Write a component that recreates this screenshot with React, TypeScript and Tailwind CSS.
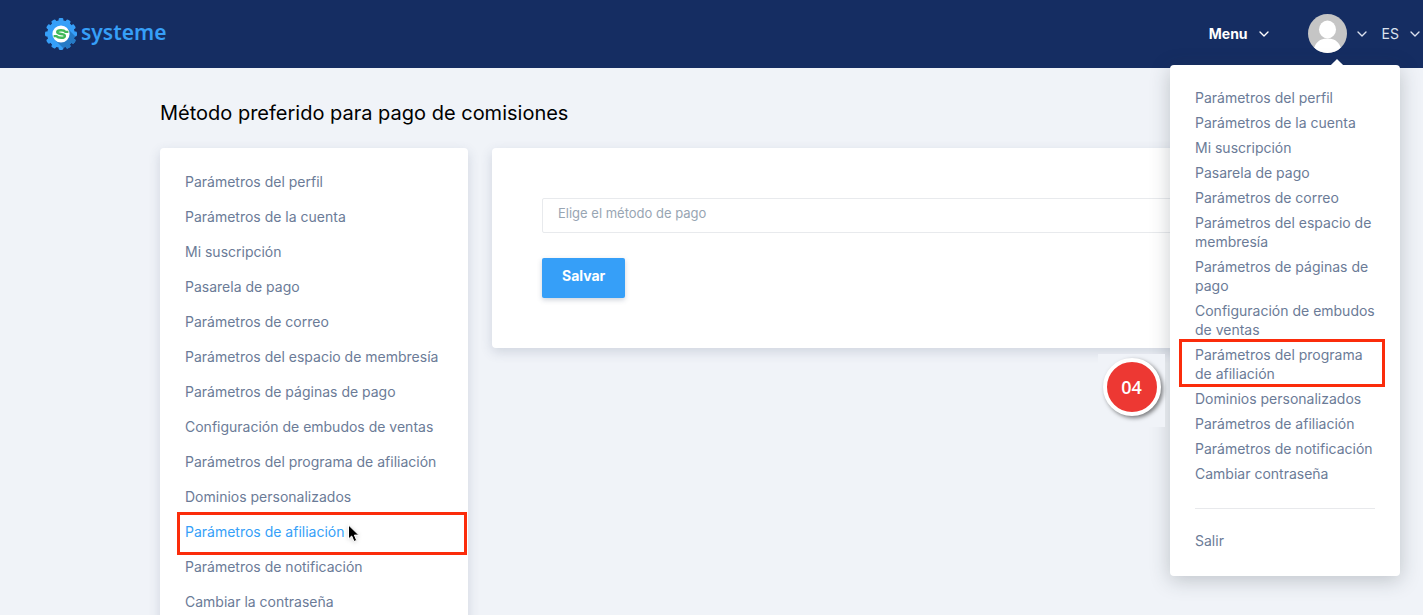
import { ChevronDown } from 'lucide-react'

const profileLinks = [
  'Parámetros del perfil',
  'Parámetros de la cuenta',
  'Mi suscripción',
  'Pasarela de pago',
  'Parámetros de correo',
  'Parámetros del espacio de membresía',
  'Parámetros de páginas de pago',
  'Configuración de embudos de ventas',
  'Parámetros del programa de afiliación',
  'Dominios personalizados',
  'Parámetros de afiliación',
  'Parámetros de notificación',
]

const sidebarLinks = [...profileLinks, 'Cambiar la contraseña']
const menuLinks = [...profileLinks, 'Cambiar contraseña']

const teeth = [0, 30, 60, 90, 120, 150]

function Logo() {
  return (
    <a href="#" className="flex items-center gap-1 text-[#369ff8]">
      <svg viewBox="0 0 32 32" className="size-8" aria-hidden="true">
        <clipPath id="gear">
          <circle cx="16" cy="16" r="13.8" />
          {teeth.map((angle) => (
            <rect key={angle} x="13.6" y="0" width="4.8" height="32" rx="1.4" transform={`rotate(${angle} 16 16)`} />
          ))}
        </clipPath>
        <g clipPath="url(#gear)">
          <rect width="32" height="32" fill="currentColor" />
          <path d="M22 10 34 22V34H22L10 22z" fill="#267ac5" />
        </g>
        <circle cx="16" cy="16" r="8.6" fill="#fff" />
        <path
          d="M23.4 13.9H20.600c-1-1.300-2.500-1.700-4.600-1.700-2.400 0-3.800.6-3.800 1.900 0 2.900 7.700.9 7.700 3.800 0 1.300-1.500 1.900-3.800 1.900-2 0-3.600-.4-4.700-1.700H8.600"
          fill="none"
          stroke="#41b95a"
          strokeWidth="2.4"
        />
      </svg>
      <span className="pb-1 font-['Noto_Sans',sans-serif] text-[21px] leading-7 font-semibold">systeme</span>
    </a>
  )
}

function Avatar() {
  return (
    <svg viewBox="0 0 40 40" className="size-10" role="img" aria-label="Perfil">
      <clipPath id="avatar">
        <circle cx="19.5" cy="19.5" r="19.5" />
      </clipPath>
      <g clipPath="url(#avatar)">
        <rect width="40" height="40" fill="#c5c5c5" />
        <ellipse cx="19.500" cy="15.5" rx="8.5" ry="9" fill="#fff" />
        <path d="M5.500 40c0-8 3-12.500 8-14.500 3.500-1.500 8.500-1.500 12 0 5 2 8 6.500 8 14.500z" fill="#fff" />
      </g>
    </svg>
  )
}

function Header() {
  return (
    <header className="flex h-[68px] items-center justify-between bg-[#152d62] pl-[45px] text-sm text-white">
      <Logo />
      <nav className="flex items-center">
        <button className="mr-9 flex items-center gap-2 font-bold">
          Menu
          <ChevronDown className="size-4" />
        </button>
        <button className="mr-3 flex items-center gap-1.5 text-[#dce2ee]">
          <Avatar />
          <ChevronDown className="size-4" />
        </button>
        <button className="flex items-center gap-2 text-[#dce2ee]">
          ES
          <ChevronDown className="size-4" />
        </button>
      </nav>
    </header>
  )
}

function Cursor() {
  return (
    <svg viewBox="0 0 14 20" className="absolute top-2.5 left-[162px] h-5 w-3.5 drop-shadow-sm" aria-hidden="true">
      <path d="M1.500 1v14l3.200-3 2.300 5.500 2.700-1.100-2.300-5.300h4.400z" fill="#000" stroke="#fff" />
    </svg>
  )
}

function Sidebar() {
  return (
    <aside className="w-[308px] shrink-0 rounded bg-white px-[25px] py-4 shadow-[0_4px_12px_rgba(60,80,110,0.18)]">
      <ul>
        {sidebarLinks.map((label) => {
          const active = label === 'Parámetros de afiliación'
          return (
            <li key={label} className="relative h-[35px] leading-[35px] whitespace-nowrap">
              <a href="#" className={active ? 'text-[#369ff8]' : ''}>{label}</a>
              {active && (
                <>
                  <span className="absolute -inset-x-2 -top-0.5 -right-6 -bottom-1.5 border-3 border-[#fb2c0b]" />
                  <Cursor />
                </>
              )}
            </li>
          )
        })}
      </ul>
    </aside>
  )
}

function ProfileMenu() {
  return (
    <div className="absolute top-[65px] right-[23px] w-[230px] rounded bg-white px-[25px] pt-[23px] pb-[26px] leading-[19px] shadow-[0_4px_20px_rgba(40,50,60,0.25)]">
      <span className="absolute -top-1 right-[58px] size-2.5 rotate-45 bg-white" />
      <ul className="flex flex-col gap-1.5">
        {menuLinks.map((label) => (
          <li key={label} className="relative">
            <a href="#">{label}</a>
            {label === 'Parámetros del programa de afiliación' && (
              <span className="absolute -inset-x-4 -top-1.5 -right-2.5 -bottom-1 border-3 border-[#fb2c0b]" />
            )}
          </li>
        ))}
      </ul>
      <hr className="mt-[25px] mb-[22px] border-[#e8e9ec]" />
      <a href="#">Salir</a>
    </div>
  )
}

export default function App() {
  return (
    <div className="relative h-screen overflow-hidden bg-[#f0f3f8] font-[Inter,sans-serif] text-sm text-[#6b7b97]">
      <Header />
      <main className="px-40 pt-[30px]">
        <h1 className="text-xl leading-[30px] text-black">Método preferido para pago de comisiones</h1>
        <div className="mt-5 flex items-start gap-6">
          <Sidebar />
          <form className="flex-1 rounded bg-white p-[50px] shadow-[0_4px_12px_rgba(60,80,110,0.18)]">
            <select
              aria-label="Elige el método de pago"
              className="block h-[35px] w-full appearance-none rounded-xs border border-[#e8eaed] bg-white px-[15px] pb-1 text-[13px] text-[#98a5b3]"
            >
              <option>Elige el método de pago</option>
            </select>
            <button
              type="button"
              className="mt-[25px] h-10 rounded-xs bg-[#369ff8] px-5 pb-1 font-bold text-white shadow-[0_2px_5px_rgba(60,80,110,0.25)]"
            >
              Salvar
            </button>
          </form>
        </div>
      </main>
      <ProfileMenu />
      <div className="absolute top-[354px] right-[258px] flex h-[73px] w-[67px] justify-center bg-[#f0f3f8] pt-1">
        <span className="flex size-[58px] items-center justify-center rounded-full border-4 border-white bg-[#ed3833] font-['Open_Sans',sans-serif] text-lg font-semibold text-white shadow-[2px_2px_4px_rgba(0,0,0,0.5)]">
          04
        </span>
      </div>
    </div>
  )
}
